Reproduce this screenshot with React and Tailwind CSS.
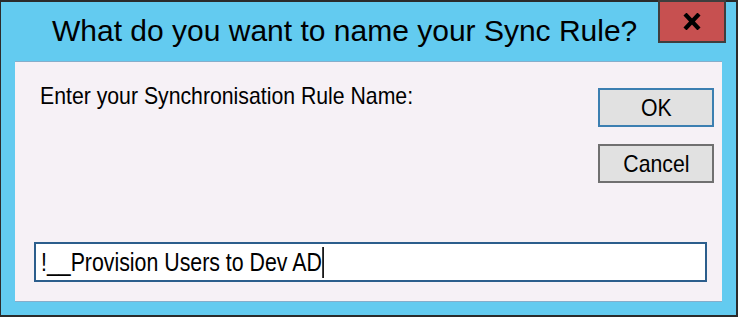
export default function App() {
  const body = { fontFamily: '"Liberation Sans", Arial, sans-serif' };
  return (
    <div className="w-[738px] h-[317px] bg-[#2b2b2b] pl-px pr-[2px] pt-[2px] pb-[2px]" style={body}>
      <div className="flex h-full flex-col bg-[#63cbf0]">
        <div className="flex h-[59px] shrink-0">
          <div className="flex-1 pl-[51px] pt-[14px] text-[30px] leading-none text-black whitespace-nowrap">
            What do you want to name your Sync Rule?
          </div>
          <div className="-mt-[2px] mr-[10px] flex h-[43px] w-[68px] items-center justify-center border-2 border-[#3e3e3e] bg-[#c75050]">
            <svg width="18" height="17" viewBox="0 0 18 17">
              <path d="M2 1 L16 16 M16 1 L2 16" stroke="#000" strokeWidth="4.2" fill="none" />
            </svg>
          </div>
        </div>
        <div className="mx-[14px] flex h-[241px] shrink-0 flex-col border-y border-[#86aecb] bg-[#f6f1f6]">
          <div className="flex">
            <div className="flex-1 pl-[25px] pt-[22px]">
              <span className="inline-block origin-left scale-x-[0.885] whitespace-nowrap text-[24px] leading-none text-black">
                Enter your Synchronisation Rule Name:
              </span>
            </div>
            <div className="mr-[8px] mt-[26px] flex w-[116px] flex-col gap-[17px]">
              <button className="flex h-[39px] items-center justify-center border-2 border-[#3c7fb1] bg-[#e1e1e1]">
                <span className="inline-block scale-x-[0.885] text-[24px] leading-none text-black">OK</span>
              </button>
              <button className="flex h-[39px] items-center justify-center border-2 border-[#707070] bg-[#e1e1e1]">
                <span className="inline-block scale-x-[0.885] text-[24px] leading-none text-black">Cancel</span>
              </button>
            </div>
          </div>
          <div className="mt-auto mb-[19px] ml-[19px] mr-[15px] flex h-[40px] items-center border-2 border-[#2c5e8c] bg-white pl-[5px]">
            <span className="inline-flex origin-left scale-x-[0.82] items-center whitespace-nowrap text-[26px] leading-none text-black">
              !__Provision Users to Dev AD
              <span className="ml-[1px] inline-block h-[31px] w-[2px] bg-black" />
            </span>
          </div>
        </div>
      </div>
    </div>
  );
}
